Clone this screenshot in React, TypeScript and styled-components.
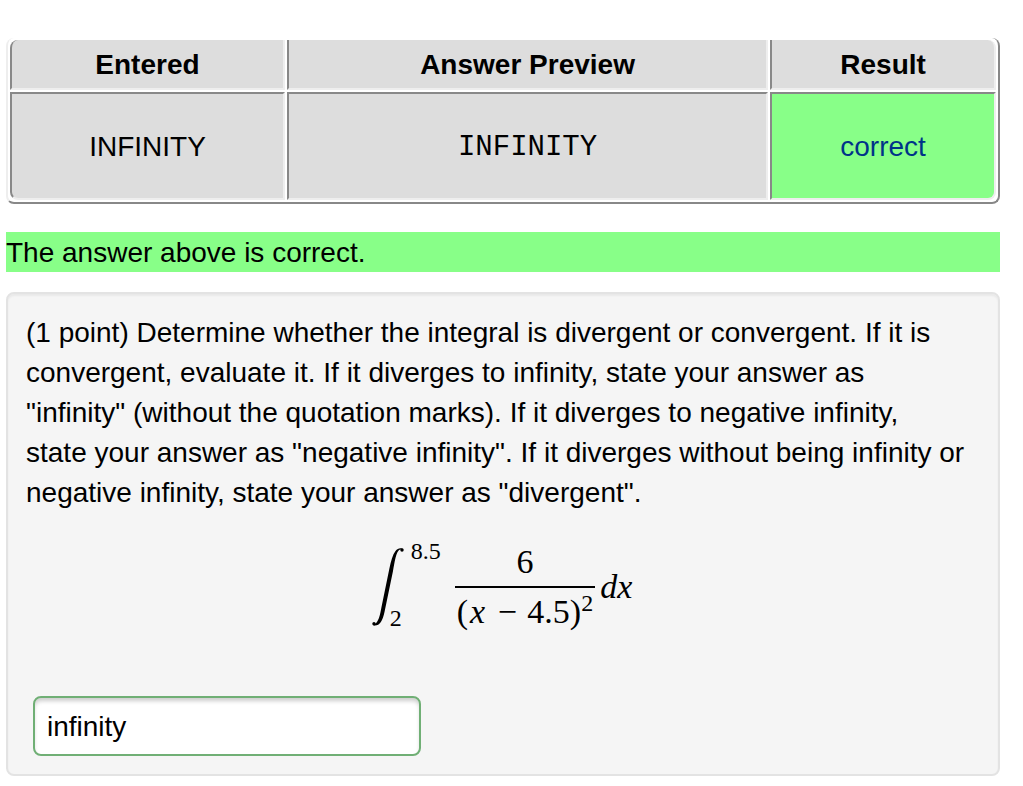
import React from "react";
import styled, { createGlobalStyle } from "styled-components";

const GlobalStyle = createGlobalStyle`
  *, *::before, *::after { box-sizing: border-box; }
  body {
    margin: 0;
    background: #fff;
    color: #000;
    font-family: "Liberation Sans", Arial, sans-serif;
    font-size: 28px;
    line-height: 40px;
  }
`;

const Page = styled.main`
  padding: 38px 23px 10px 6px;
`;

const ResultsTable = styled.table`
  width: 100%;
  table-layout: fixed;
  border-collapse: separate;
  border-spacing: 2px;
  border: 2px solid;
  border-color: transparent #888 #888 #eee;
  border-top: 0;
  border-radius: 8px;
  text-align: center;

  thead th:first-child { border-top-left-radius: 8px; }
  thead th:last-child { border-top-right-radius: 8px; }
  tbody td:first-child { border-bottom-left-radius: 8px; }
  tbody td:last-child { border-bottom-right-radius: 8px; }
`;

const HeadCell = styled.th<{ $width: string }>`
  width: ${(p) => p.$width};
  height: 50px;
  padding: 5px 4px 3px;
  background: #ddd;
  border: 2px solid;
  border-color: transparent #eee #eee #888;
  border-top: 0;
  font-weight: bold;
`;

const BodyCell = styled.td<{ $correct?: boolean }>`
  height: 108px;
  padding: 6px 4px 4px;
  background: ${(p) => (p.$correct ? "#8f8" : "#ddd")};
  border: 2px solid;
  border-color: #888 #eee #eee #888;
`;

const ResultLink = styled.a`
  color: #038;
  text-decoration: none;
`;

const Preview = styled.code`
  font-family: "Liberation Mono", "Courier New", monospace;
  font-size: 29px;
`;

const Banner = styled.div`
  margin-top: 28px;
  padding-top: 2px;
  background: #8f8;
  line-height: 38px;
`;

const Problem = styled.section`
  margin-top: 20px;
  padding: 19px 18px 18px;
  background: #f5f5f5;
  border: 2px solid #e3e3e3;
  border-radius: 8px;
  box-shadow: inset 0 2px 2px rgba(0, 0, 0, 0.05);
`;

const Statement = styled.p`
  margin: 0;
`;

const Formula = styled.div`
  display: flex;
  justify-content: center;
  align-items: center;
  margin: 22px 0 57px;
  padding-right: 2px;
  font-family: "Liberation Serif", "Times New Roman", serif;
  font-size: 34px;
  line-height: 40px;
`;

const IntegralSign = styled.svg`
  width: 32px;
  height: 80px;
`;

const Limits = styled.div`
  display: flex;
  flex-direction: column;
  justify-content: space-between;
  height: 99px;
  margin: 0 14px 5px -14px;
  font-size: 24px;
  line-height: 32px;
`;

const UpperLimit = styled.span`
  padding-left: 21px;
`;

const Fraction = styled.div`
  display: flex;
  flex-direction: column;
  align-items: center;
  margin-right: 5px;
`;

const Numerator = styled.span`
  padding: 0 4px 4px;
`;

const Denominator = styled.span`
  padding: 4px 2px 0;
  border-top: 2px solid #000;
  white-space: nowrap;
`;

const Operator = styled.span`
  padding: 0 2px;
`;

const Variable = styled.i`
  padding: 0 2px;
`;

const Power = styled.sup`
  font-size: 24px;
  line-height: 0;
`;

const AnswerInput = styled.input`
  display: block;
  width: 388px;
  max-width: 100%;
  height: 60px;
  margin-left: 7px;
  padding: 9px 12px 7px;
  background: #fff;
  border: 2px solid #70af75;
  border-radius: 8px;
  box-shadow: inset 0 4px 4px -1px rgba(0, 0, 0, 0.2);
  color: #000;
  font: inherit;
  outline: none;
`;

export default function App() {
  return (
    <>
      <GlobalStyle />
      <Page>
        <ResultsTable>
          <thead>
            <tr>
              <HeadCell scope="col" $width="28%">Entered</HeadCell>
              <HeadCell scope="col" $width="49%">Answer Preview</HeadCell>
              <HeadCell scope="col" $width="23%">Result</HeadCell>
            </tr>
          </thead>
          <tbody>
            <tr>
              <BodyCell>INFINITY</BodyCell>
              <BodyCell><Preview>INFINITY</Preview></BodyCell>
              <BodyCell $correct><ResultLink href="#answer">correct</ResultLink></BodyCell>
            </tr>
          </tbody>
        </ResultsTable>

        <Banner role="status">The answer above is correct.</Banner>

        <Problem>
          <Statement id="statement">
            (1 point) Determine whether the integral is divergent or convergent. If it is
            <br />
            convergent, evaluate it. If it diverges to infinity, state your answer as
            <br />
            "infinity" (without the quotation marks). If it diverges to negative infinity,
            <br />
            state your answer as "negative infinity". If it diverges without being infinity or
            <br />
            negative infinity, state your answer as "divergent".
          </Statement>

          <Formula>
            <IntegralSign viewBox="0 0 32 80" aria-hidden="true">
              <path
                d="M31.500 2.500C29.500 0.700 26 0.700 23.500 4C20.500 8 19 14 17.500 21L9.500 60C8 68 6.500 76 2 77.300L1.500 78.500C7.500 79.500 10.500 74 12.500 65L21 24C22.500 16 24 4 28 2.500Z"
              />
              <circle cx="30" cy="3" r="1.700" />
              <circle cx="2" cy="76.800" r="1.700" />
            </IntegralSign>
            <Limits>
              <UpperLimit>8.5</UpperLimit>
              <span>2</span>
            </Limits>
            <Fraction>
              <Numerator>6</Numerator>
              <Denominator>
                (<Variable>x</Variable> <Operator>−</Operator> 4.5)<Power>2</Power>
              </Denominator>
            </Fraction>
            <i>dx</i>
          </Formula>

          <AnswerInput
            id="answer"
            type="text"
            defaultValue="infinity"
            aria-labelledby="statement"
            spellCheck={false}
          />
        </Problem>
      </Page>
    </>
  );
}
